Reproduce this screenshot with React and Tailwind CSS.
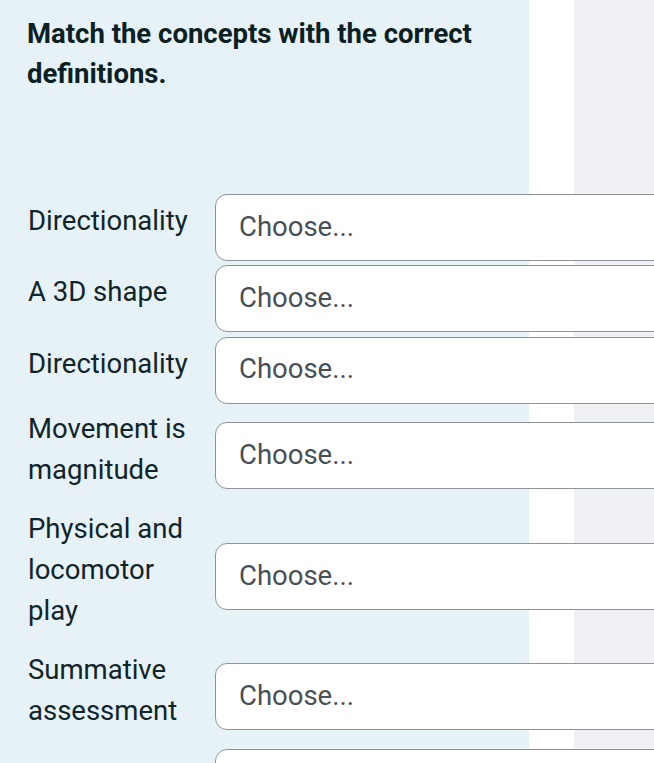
import React from "react";

const items = [
  "Directionality",
  "A 3D shape",
  "Directionality",
  "Movement is magnitude",
  "Physical and locomotor play",
  "Summative assessment",
  "",
];

function MatchRow({ label }) {
  return (
    <div className="flex items-center">
      <div className="w-[176px] shrink-0 pt-[1px] pb-[17px] text-[27.5px] leading-[41px] text-[#10252b]">
        {label}
      </div>
      <div className="ml-[11px] shrink-0 pt-[1px] pb-[3.25px]">
        <div className="flex h-[67px] w-[480px] items-center rounded-[12px] border border-[#8d9398] bg-white pl-[23px] pb-[2px] text-[27.5px] text-[#484f56]">
          Choose...
        </div>
      </div>
    </div>
  );
}

export default function App() {
  return (
    <div
      className="flex h-[763px] w-full overflow-hidden"
      style={{ fontFamily: "Roboto, 'Liberation Sans', sans-serif" }}
    >
      <div className="relative z-10 w-[529px] shrink-0 bg-[#e6f2f5] pl-[28px] pt-[14px]">
        <h1 className="-ml-[1px] mb-[99px] w-[475px] text-[27.5px] font-bold leading-[40px] text-[#0c1f24]">
          Match the concepts with the correct definitions.
        </h1>
        <div className="flex flex-col">
          {items.map((label, i) => (
            <MatchRow key={i} label={label} />
          ))}
        </div>
      </div>
      <div className="w-[45px] shrink-0 bg-white" />
      <div className="flex-1 bg-[#f0f1f5]" />
    </div>
  );
}
